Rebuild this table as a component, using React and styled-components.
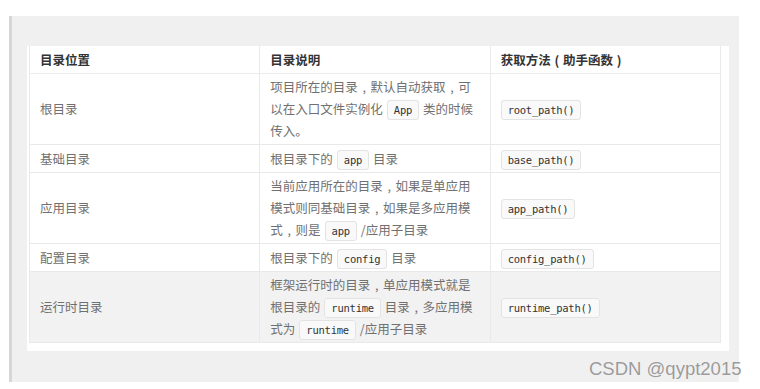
import React from "react";
import styled, { createGlobalStyle } from "styled-components";

// ------------------------
// Global
// ------------------------
const GlobalStyle = createGlobalStyle`
  html, body {
    margin: 0;
    padding: 0;
    background: #ffffff;
  }
  body {
    font-family: "Noto Sans CJK SC", "Noto Sans", sans-serif;
  }
`;

// ------------------------
// Styled-components
// ------------------------
const Page = styled.div`
  position: relative;
  width: 760px;
  height: 389px;
  padding: 16px 0 0 9px;
  box-sizing: border-box;
`;

const Quote = styled.div`
  width: 730px;
  height: 366px;
  box-sizing: border-box;
  background-color: #f0f0f0;
  border-left: 3px solid #d6d6d6;
  padding: 30px 0 0 15px;
`;

const Card = styled.div`
  width: 702px;
  box-sizing: border-box;
  background-color: #ffffff;
  padding: 0 8px 8px 2px;
`;

const Table = styled.table`
  width: 692px;
  table-layout: fixed;
  border-collapse: collapse;
  font-size: 12.5px;
  color: #707070;
`;

const Th = styled.th`
  text-align: left;
  font-weight: 700;
  color: #333;
  line-height: 22px;
  padding: 2.5px 10px 2px;
  border-left: 1px solid #e9e9e9;
  border-right: 1px solid #e9e9e9;
  border-bottom: 1px solid #ececec;
`;

const Row = styled.tr`
  background-color: ${(p) => (p.$hover ? "#f2f2f2" : "#ffffff")};
`;

const Td = styled.td`
  line-height: 22px;
  padding: 2.5px 10px 2px;
  vertical-align: middle;
  border-left: 1px solid #e9e9e9;
  border-right: 1px solid #e9e9e9;
  border-bottom: 1px solid #e9e9e9;
`;

// full-width punctuation drawn centred in its em box, as the source font does
const Punct = styled.span`
  padding: 0 ${(p) => p.$pad || "0.37em"};
`;

const Code = styled.code`
  font-family: "DejaVu Sans Mono", "Liberation Mono", monospace;
  font-size: 10.5px;
  line-height: 10px;
  letter-spacing: -0.25px;
  color: #333;
  background-color: #f9f9f9;
  border: 1px solid #e3e3e3;
  border-radius: 3px;
  padding: 3px 6px;
  margin: 0 4px;
`;

const FnCode = styled(Code)`
  margin: 0;
`;

const Watermark = styled.div`
  position: absolute;
  left: 589px;
  top: 358px;
  font-family: "Liberation Sans", Arial, sans-serif;
  font-size: 18.5px;
  color: #9a9a9a;
  text-shadow: 0 0 1px #ffffff;
  white-space: nowrap;
`;

const C = () => <Punct>,</Punct>;

// ------------------------
// Data
// ------------------------
const rows = [
  {
    name: "根目录",
    desc: (
      <>
        项目所在的目录<C />默认自动获取<C />可以在入口文件实例化<Code>App</Code>类的时候传入。
      </>
    ),
    fn: "root_path()",
  },
  {
    name: "基础目录",
    desc: (
      <>
        根目录下的<Code>app</Code>目录
      </>
    ),
    fn: "base_path()",
  },
  {
    name: "应用目录",
    desc: (
      <>
        当前应用所在的目录<C />如果是单应用模式则同基础目录<C />如果是多应用模式<C />则是<Code>app</Code>/应用子目录
      </>
    ),
    fn: "app_path()",
  },
  {
    name: "配置目录",
    desc: (
      <>
        根目录下的<Code>config</Code>目录
      </>
    ),
    fn: "config_path()",
  },
  {
    name: "运行时目录",
    desc: (
      <>
        框架运行时的目录<C />单应用模式就是根目录的<Code>runtime</Code>目录<C />多应用模式为<Code>runtime</Code>/应用子目录
      </>
    ),
    fn: "runtime_path()",
    hover: true,
  },
];

// ------------------------
// App
// ------------------------
export default function App() {
  return (
    <>
      <GlobalStyle />
      <Page>
        <Quote>
          <Card>
            <Table>
              <thead>
                <tr>
                  <Th>目录位置</Th>
                  <Th>目录说明</Th>
                  <Th>
                    获取方法<Punct $pad="0.3em">(</Punct>助手函数<Punct $pad="0.3em">)</Punct>
                  </Th>
                </tr>
              </thead>
              <tbody>
                {rows.map((r) => (
                  <Row key={r.name} $hover={r.hover}>
                    <Td>{r.name}</Td>
                    <Td>{r.desc}</Td>
                    <Td>
                      <FnCode>{r.fn}</FnCode>
                    </Td>
                  </Row>
                ))}
              </tbody>
            </Table>
          </Card>
        </Quote>
        <Watermark>CSDN @qypt2015</Watermark>
      </Page>
    </>
  );
}
